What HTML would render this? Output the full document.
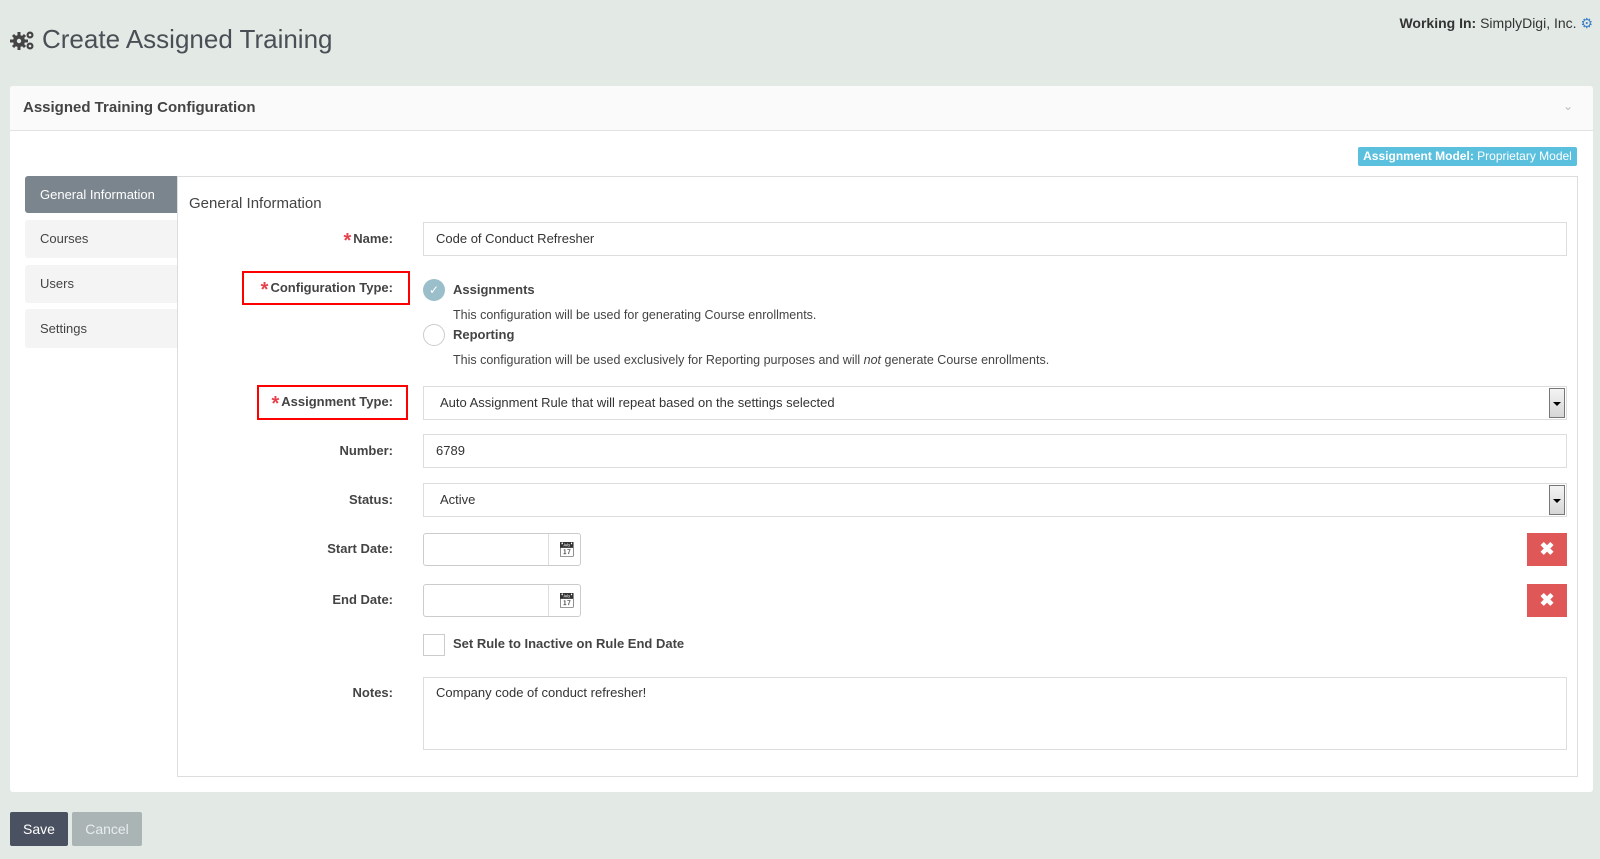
<!DOCTYPE html>
<html><head><meta charset="utf-8"><style>
*{box-sizing:border-box;margin:0;padding:0}
body{width:1600px;height:859px;background:#e3e9e5;font-family:"Liberation Sans",sans-serif;color:#333;position:relative;overflow:hidden}
.abs{position:absolute}
.h1{left:42px;top:24px;font-size:26px;color:#4a4f55;font-family:"Liberation Sans",sans-serif;font-weight:normal}
.work{right:7px;top:15px;font-size:14px;color:#333}
.panel{left:10px;top:86px;width:1583px;height:706px;background:#fff;border-radius:3px}
.phead{left:10px;top:86px;width:1583px;height:45px;background:#fafafa;border-bottom:1px solid #e2e2e2;border-radius:3px 3px 0 0}
.ptitle{left:23px;top:99px;font-size:15px;font-weight:bold;color:#444;font-family:"Liberation Sans",sans-serif}
.badge{left:1358px;top:147px;width:219px;height:19px;background:#5bc0de;color:#fff;font-size:12px;line-height:19px;text-align:center;border-radius:2px}
.tab{left:25px;width:152px;background:#f4f4f4;font-size:13px;color:#444;padding-left:15px;font-family:"Liberation Sans",sans-serif;border-radius:3px 0 0 3px}
.box{left:177px;top:176px;width:1401px;height:601px;border:1px solid #ddd}
.lbl{right:1207px;font-size:13px;font-weight:bold;color:#444;font-family:"Liberation Sans",sans-serif;text-align:right;white-space:nowrap}
.star{color:#e5424d;font-size:20px;font-weight:bold;position:relative;top:4px;margin-right:2px;line-height:10px}
.inp{left:423px;width:1144px;height:34px;border:1px solid #ddd;font-size:13px;color:#333;padding:0 12px;line-height:32px;background:#fff}
.sel .arr{position:absolute;right:1px;top:1px;width:16px;height:30px;border:1px solid #777;background:linear-gradient(#f4f4f4,#d6d6d6)}
.sel .arr:after{content:"";position:absolute;left:3px;top:13px;border:4px solid transparent;border-top:4px solid #000;border-bottom:0}
.redbox{border:2px solid #f00}
.dg{left:423px;width:158px;height:33px;border:1px solid #ccc;border-radius:3px;background:#fff}
.dg .ad{position:absolute;left:124px;top:0;width:1px;height:31px;background:#ddd}
.x{left:1527px;width:40px;height:33px;background:#e05757;color:#fff;font-size:18px;font-weight:bold;text-align:center;line-height:33px}
.txt{font-size:12.5px;color:#444}
.b{font-size:13px;font-weight:bold;color:#444}
</style></head><body>
<svg class="abs" style="left:10px;top:29px" width="26" height="22" viewBox="0 0 26 22"><g fill="#444"><circle cx="9" cy="12" r="6"/><g stroke="#444" stroke-width="3"><line x1="9" y1="3" x2="9" y2="21"/><line x1="0" y1="12" x2="18" y2="12"/><line x1="3" y1="6" x2="15" y2="18"/><line x1="15" y1="6" x2="3" y2="18"/></g><circle cx="9" cy="12" r="2.2" fill="#e3e9e5"/><circle cx="20" cy="6" r="3.5"/><circle cx="20" cy="17" r="3.5"/><circle cx="20" cy="6" r="1.3" fill="#e3e9e5"/><circle cx="20" cy="17" r="1.3" fill="#e3e9e5"/></g></svg>
<div class="abs h1">Create Assigned Training</div>
<div class="abs work"><b>Working In:</b> SimplyDigi, Inc. <span style="color:#3a7fc4">⚙</span></div>
<div class="abs panel"></div>
<div class="abs phead"></div>
<div class="abs ptitle">Assigned Training Configuration</div>
<div class="abs" style="left:1563px;top:99px;color:#bbb;font-size:12px">⌄</div>
<div class="abs badge"><b>Assignment Model:</b> Proprietary Model</div>
<div class="abs box"></div>
<div class="abs tab" style="top:176px;height:37px;line-height:37px;background:#7a858d;color:#fff">General Information</div>
<div class="abs tab" style="top:220px;height:38px;line-height:38px">Courses</div>
<div class="abs tab" style="top:265px;height:38px;line-height:38px">Users</div>
<div class="abs tab" style="top:309px;height:39px;line-height:39px">Settings</div>
<div class="abs" style="left:189px;top:195px;font-size:15px;color:#444;font-family:'Liberation Sans',sans-serif">General Information</div>

<div class="abs lbl" style="top:231px"><span class="star">*</span>Name:</div>
<div class="abs inp" style="top:222px">Code of Conduct Refresher</div>

<div class="abs redbox" style="left:242px;top:271px;width:168px;height:34px"></div>
<div class="abs lbl" style="top:280px"><span class="star">*</span>Configuration Type:</div>
<div class="abs" style="left:423px;top:279px;width:22px;height:22px;border-radius:50%;background:#9bbfca;color:#fff;font-size:12px;text-align:center;line-height:22px">✓</div>
<div class="abs b" style="left:453px;top:282px">Assignments</div>
<div class="abs txt" style="left:453px;top:308px">This configuration will be used for generating Course enrollments.</div>
<div class="abs" style="left:423px;top:324px;width:22px;height:22px;border-radius:50%;border:1px solid #ccc;background:#fff"></div>
<div class="abs b" style="left:453px;top:327px">Reporting</div>
<div class="abs txt" style="left:453px;top:353px">This configuration will be used exclusively for Reporting purposes and will <i>not</i> generate Course enrollments.</div>

<div class="abs redbox" style="left:257px;top:385px;width:151px;height:35px"></div>
<div class="abs lbl" style="top:394px"><span class="star">*</span>Assignment Type:</div>
<div class="abs inp sel" style="top:386px;padding-left:16px">Auto Assignment Rule that will repeat based on the settings selected<span class="arr"></span></div>

<div class="abs lbl" style="top:443px">Number:</div>
<div class="abs inp" style="top:434px">6789</div>

<div class="abs lbl" style="top:492px">Status:</div>
<div class="abs inp sel" style="top:483px;padding-left:16px">Active<span class="arr"></span></div>

<div class="abs lbl" style="top:541px">Start Date:</div>
<div class="abs dg" style="top:533px"><span class="ad"></span><span style="position:absolute;left:134px;top:7px;font-size:14px">📅︎</span></div>
<div class="abs x" style="top:533px">✖</div>

<div class="abs lbl" style="top:592px">End Date:</div>
<div class="abs dg" style="top:584px"><span class="ad"></span><span style="position:absolute;left:134px;top:7px;font-size:14px">📅︎</span></div>
<div class="abs x" style="top:584px">✖</div>

<div class="abs" style="left:423px;top:634px;width:22px;height:22px;border:1px solid #ccc;background:#fff"></div>
<div class="abs b" style="left:453px;top:636px">Set Rule to Inactive on Rule End Date</div>

<div class="abs lbl" style="top:685px">Notes:</div>
<div class="abs inp" style="top:677px;height:73px;line-height:20px;padding-top:5px">Company code of conduct refresher!</div>

<div class="abs" style="left:10px;top:812px;width:58px;height:34px;background:#4a5160;color:#fff;font-size:14px;text-align:center;line-height:34px;border-radius:2px">Save</div>
<div class="abs" style="left:72px;top:812px;width:70px;height:34px;background:#aab4b4;color:#e8ecec;font-size:14px;text-align:center;line-height:34px;border-radius:2px">Cancel</div>
</body></html>
